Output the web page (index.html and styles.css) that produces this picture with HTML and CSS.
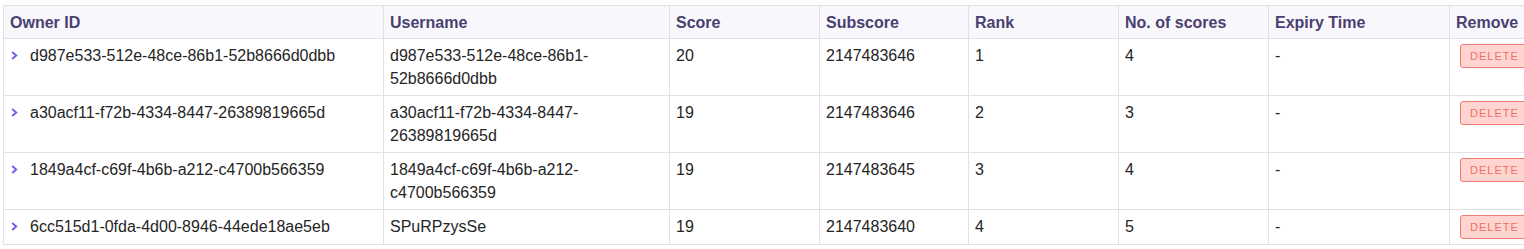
FILE: index.html
```html
<!DOCTYPE html>
<html>
<head>
<meta charset="utf-8">
<link rel="stylesheet" href="styles.css">
</head>
<body>
<table class="scores">
  <colgroup>
    <col class="c-owner"><col class="c-user"><col class="c-score"><col class="c-sub"><col class="c-rank"><col class="c-num"><col class="c-exp"><col class="c-rem">
  </colgroup>
  <thead>
    <tr><th>Owner ID</th><th>Username</th><th>Score</th><th>Subscore</th><th>Rank</th><th>No. of scores</th><th>Expiry Time</th><th>Remove</th></tr>
  </thead>
  <tbody>
    <tr>
      <td><span class="owner"><svg class="chev" width="7" height="9" viewBox="0 0 7 9"><path d="M1.2 1 L5.2 4.5 L1.2 8" fill="none" stroke="#6c5ce7" stroke-width="1.9"/></svg>d987e533-512e-48ce-86b1-52b8666d0dbb</span></td>
      <td>d987e533-512e-48ce-86b1-52b8666d0dbb</td><td>20</td><td>2147483646</td><td>1</td><td>4</td><td>-</td>
      <td><button class="del">Delete</button></td>
    </tr>
    <tr>
      <td><span class="owner"><svg class="chev" width="7" height="9" viewBox="0 0 7 9"><path d="M1.2 1 L5.2 4.5 L1.2 8" fill="none" stroke="#6c5ce7" stroke-width="1.9"/></svg>a30acf11-f72b-4334-8447-26389819665d</span></td>
      <td>a30acf11-f72b-4334-8447-26389819665d</td><td>19</td><td>2147483646</td><td>2</td><td>3</td><td>-</td>
      <td><button class="del">Delete</button></td>
    </tr>
    <tr>
      <td><span class="owner"><svg class="chev" width="7" height="9" viewBox="0 0 7 9"><path d="M1.2 1 L5.2 4.5 L1.2 8" fill="none" stroke="#6c5ce7" stroke-width="1.9"/></svg>1849a4cf-c69f-4b6b-a212-c4700b566359</span></td>
      <td>1849a4cf-c69f-4b6b-a212-c4700b566359</td><td>19</td><td>2147483645</td><td>3</td><td>4</td><td>-</td>
      <td><button class="del">Delete</button></td>
    </tr>
    <tr>
      <td><span class="owner"><svg class="chev" width="7" height="9" viewBox="0 0 7 9"><path d="M1.2 1 L5.2 4.5 L1.2 8" fill="none" stroke="#6c5ce7" stroke-width="1.9"/></svg>6cc515d1-0fda-4d00-8946-44ede18ae5eb</span></td>
      <td>SPuRPzysSe</td><td>19</td><td>2147483640</td><td>4</td><td>5</td><td>-</td>
      <td><button class="del">Delete</button></td>
    </tr>
  </tbody>
</table>
</body>
</html>
```
FILE: styles.css
```css
html, body {
  margin: 0;
  background: #ffffff;
  overflow: hidden;
}
body {
  padding: 5px 0 0 3px;
  font-family: "Liberation Sans", Arial, sans-serif;
  font-size: 16px;
  color: #222222;
}
.scores {
  border-collapse: collapse;
  table-layout: fixed;
  width: 1580px;
}
.c-owner { width: 380px; }
.c-user { width: 286px; }
.c-score { width: 150px; }
.c-sub { width: 149px; }
.c-rank { width: 150px; }
.c-num { width: 150px; }
.c-exp { width: 181px; }
.c-rem { width: 134px; }
.scores th,
.scores td {
  border: 1px solid #e1e0e8;
  line-height: 23px;
  text-align: left;
  vertical-align: top;
}
.scores th {
  padding: 5px 6px 4px;
  background: #f8f8fc;
  color: #4a4070;
  font-weight: bold;
}
.scores td {
  padding: 5px 6px;
  color: #252525;
}
.owner {
  display: flex;
  align-items: center;
}
.chev {
  flex: none;
  margin: 0 12px 0 1px;
}
.del {
  display: inline-block;
  margin-left: 4px;
  height: 24px;
  padding: 0 9px;
  background: #ffd4d1;
  border: 1px solid #f47c74;
  border-radius: 3px;
  color: #ef7067;
  font-family: "Liberation Sans", Arial, sans-serif;
  font-size: 11px;
  letter-spacing: 1px;
  text-transform: uppercase;
  line-height: 22px;
  vertical-align: top;
}
```
